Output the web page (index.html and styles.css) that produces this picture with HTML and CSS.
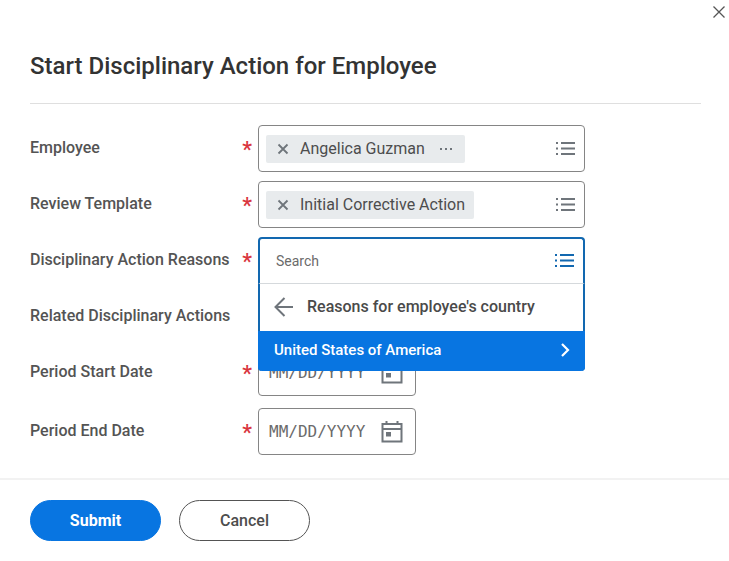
FILE: index.html
```
<!DOCTYPE html>
<html lang="en">
<head>
    <meta charset="UTF-8">
    <meta name="viewport" content="width=device-width, initial-scale=1.0">
    <title>Start Disciplinary Action for Employee</title>
    <link rel="stylesheet" href="styles.css">
</head>
<body>
    <!-- shared icons -->
    <svg class="sprite" aria-hidden="true">
        <symbol id="icon-list" viewBox="0 0 20 16">
            <path d="M1 2h2M6 2h14M1 7.500h2M6 7.500h14M1 13h2M6 13h14" fill="none" stroke="currentColor" stroke-width="2"/>
        </symbol>
        <symbol id="icon-x" viewBox="0 0 12 12">
            <path d="M1.500 1.500l9 9M10.500 1.500l-9 9" fill="none" stroke="currentColor" stroke-width="1.800"/>
        </symbol>
        <symbol id="icon-calendar" viewBox="0 0 22 24">
            <path d="M1.500 4h19v17.500h-19zM1.500 9h19" fill="none" stroke="currentColor" stroke-width="2"/>
            <path d="M5.500 1v3M16.500 1v3" fill="none" stroke="currentColor" stroke-width="2"/>
            <path d="M5 12h5v4.500H5z" fill="currentColor"/>
        </symbol>
    </svg>

    <form class="dialog">
        <header class="header">
            <h1 class="title">Start Disciplinary Action for Employee</h1>
            <button type="button" class="close" aria-label="Close">
                <svg width="14" height="14" viewBox="0 0 14 14"><path d="M1.500 1.500l11 11M12.500 1.500l-11 11" fill="none" stroke="currentColor" stroke-width="1.300"/></svg>
            </button>
        </header>

        <div class="fields">
            <div class="row">
                <label class="label required" for="employee">Employee</label>
                <div class="box">
                    <div class="chip">
                        <button type="button" class="icon-btn" aria-label="Remove Angelica Guzman"><svg width="12" height="12"><use href="#icon-x"/></svg></button>
                        <span>Angelica Guzman</span>
                        <button type="button" class="icon-btn more" aria-label="Related actions">
                            <svg width="14" height="4" viewBox="0 0 14 4"><path d="M1 1h2v2H1zM6 1h2v2H6zM11 1h2v2h-2z" fill="currentColor"/></svg>
                        </button>
                    </div>
                    <input type="text" class="input" id="employee">
                    <button type="button" class="icon-btn" aria-label="Show employees"><svg width="20" height="16"><use href="#icon-list"/></svg></button>
                </div>
            </div>

            <div class="row">
                <label class="label required" for="template">Review Template</label>
                <div class="box">
                    <div class="chip">
                        <button type="button" class="icon-btn" aria-label="Remove Initial Corrective Action"><svg width="12" height="12"><use href="#icon-x"/></svg></button>
                        <span>Initial Corrective Action</span>
                    </div>
                    <input type="text" class="input" id="template">
                    <button type="button" class="icon-btn" aria-label="Show templates"><svg width="20" height="16"><use href="#icon-list"/></svg></button>
                </div>
            </div>

            <div class="row">
                <label class="label required" for="reasons">Disciplinary Action Reasons</label>
                <div class="box open">
                    <input type="text" class="input search" id="reasons" placeholder="Search">
                    <button type="button" class="icon-btn" aria-label="Show reasons"><svg width="20" height="16"><use href="#icon-list"/></svg></button>
                    <div class="menu">
                        <div class="menu-head">
                            <button type="button" class="icon-btn" aria-label="Back">
                                <svg width="20" height="20" viewBox="0 0 20 20"><path d="M19 10H2M10.500 1L1.500 10l9 9" fill="none" stroke="currentColor" stroke-width="2"/></svg>
                            </button>
                            <span>Reasons for employee's country</span>
                        </div>
                        <button type="button" class="option">
                            <span>United States of America</span>
                            <svg width="10" height="14" viewBox="0 0 10 14"><path d="M2 1l6 6-6 6" fill="none" stroke="currentColor" stroke-width="2.200"/></svg>
                        </button>
                    </div>
                </div>
            </div>

            <div class="row">
                <label class="label" for="related">Related Disciplinary Actions</label>
                <div class="box">
                    <input type="text" class="input" id="related">
                    <button type="button" class="icon-btn" aria-label="Show actions"><svg width="20" height="16"><use href="#icon-list"/></svg></button>
                </div>
            </div>

            <div class="row">
                <label class="label required" for="start">Period Start Date</label>
                <div class="box date">
                    <input type="text" class="input" id="start" placeholder="MM/DD/YYYY">
                    <button type="button" class="icon-btn" aria-label="Pick start date"><svg width="22" height="24"><use href="#icon-calendar"/></svg></button>
                </div>
            </div>

            <div class="row last">
                <label class="label required" for="end">Period End Date</label>
                <div class="box date">
                    <input type="text" class="input" id="end" placeholder="MM/DD/YYYY">
                    <button type="button" class="icon-btn" aria-label="Pick end date"><svg width="22" height="24"><use href="#icon-calendar"/></svg></button>
                </div>
            </div>
        </div>

        <footer class="footer">
            <button type="submit" class="btn primary">Submit</button>
            <button type="button" class="btn">Cancel</button>
        </footer>
    </form>
</body>
</html>
```
FILE: styles.css
```
*{
    box-sizing: border-box;
}
body{
    margin: 0;
    background-color: #fff;
    color: #545454;
    font-family: Roboto, "Liberation Sans", sans-serif;
    font-size: 16px;
    line-height: 20px;
}
button, input{
    font: inherit;
    color: inherit;
}
.sprite{
    display: none;
}
.header{
    position: relative;
    margin: 0 28px 0 30px;
    padding: 52px 0 23px;
    border-bottom: 1px solid #dfdfdf;
}
.title{
    margin: 0;
    font-size: 24px;
    font-weight: 500;
    line-height: 28px;
    color: #333;
}
.close{
    position: absolute;
    top: 5px;
    right: -25px;
    display: flex;
    padding: 0;
    border: 0;
    background: none;
    color: #555;
    cursor: pointer;
}
.fields{
    display: flex;
    flex-direction: column;
    gap: 9px;
    padding: 21px 30px 23px;
}
.row{
    display: grid;
    grid-template-columns: 222px minmax(0, 327px);
    column-gap: 6px;
    align-items: center;
}
.row.last{
    margin-top: 3px;
}
.label{
    display: flex;
    justify-content: space-between;
    padding-bottom: 2px;
    font-weight: 500;
    white-space: nowrap;
}
.required::after{
    content: "*";
    height: 20px;
    color: #d9363e;
    font-size: 22px;
    line-height: 24px;
}
.box{
    position: relative;
    display: flex;
    align-items: center;
    height: 47px;
    padding: 0 9px 0 7px;
    border: 1px solid #858585;
    border-radius: 4px;
    background-color: #fff;
}
.box.date{
    width: 158px;
    padding: 0 12px 0 10px;
    font-family: "DejaVu Sans Mono", monospace;
}
.box.open{
    padding: 0 9px 0 16px;
    border: 2px solid #1268b0;
    border-bottom: 1px solid #d5d9dc;
    border-radius: 4px 4px 0 0;
}
.input{
    flex: 1;
    width: 0;
    min-width: 0;
    padding: 0;
    border: 0;
    outline: none;
    background: none;
    color: #545454;
}
.search{
    font-size: 14px;
}
.input::placeholder{
    color: #6b6b6b;
    opacity: 1;
}
.icon-btn{
    display: flex;
    flex: none;
    padding: 0;
    border: 0;
    background: none;
    color: #6f757b;
    cursor: pointer;
}
.open > .icon-btn{
    color: #1268b0;
}
.chip{
    display: flex;
    align-items: center;
    gap: 11px;
    height: 28px;
    padding: 0 9px 0 11px;
    border-radius: 2px;
    background-color: #e8ebed;
    color: #4d4d4d;
    white-space: nowrap;
}
.more{
    padding: 0 3px;
}
.menu{
    position: absolute;
    z-index: 10;
    top: 100%;
    left: -2px;
    right: -2px;
    margin-top: 1px;
    border: solid #1268b0;
    border-width: 0 2px;
    border-radius: 0 0 4px 4px;
    background-color: #fff;
}
.menu-head{
    display: flex;
    align-items: center;
    gap: 13px;
    height: 47px;
    padding: 0 14px 2px;
    color: #4a4a4a;
    font-weight: 500;
    white-space: nowrap;
}
.option{
    display: flex;
    align-items: center;
    justify-content: space-between;
    width: calc(100% + 4px);
    height: 40px;
    margin: 0 -2px;
    padding: 0 15px 2px 16px;
    border: 0;
    border-radius: 0 0 4px 4px;
    background-color: #0875e1;
    color: #fff;
    font-size: 15px;
    font-weight: 500;
    cursor: pointer;
}
.footer{
    display: flex;
    gap: 18px;
    padding: 20px 30px;
    border-top: 2px solid #f2f2f2;
}
.btn{
    min-width: 131px;
    height: 41px;
    border: 1px solid #545454;
    border-radius: 21px;
    background-color: #fff;
    color: #4d4d4d;
    font-weight: 500;
    cursor: pointer;
}
.btn.primary{
    border-color: #0875e1;
    background-color: #0875e1;
    color: #fff;
    font-weight: 700;
}
```
